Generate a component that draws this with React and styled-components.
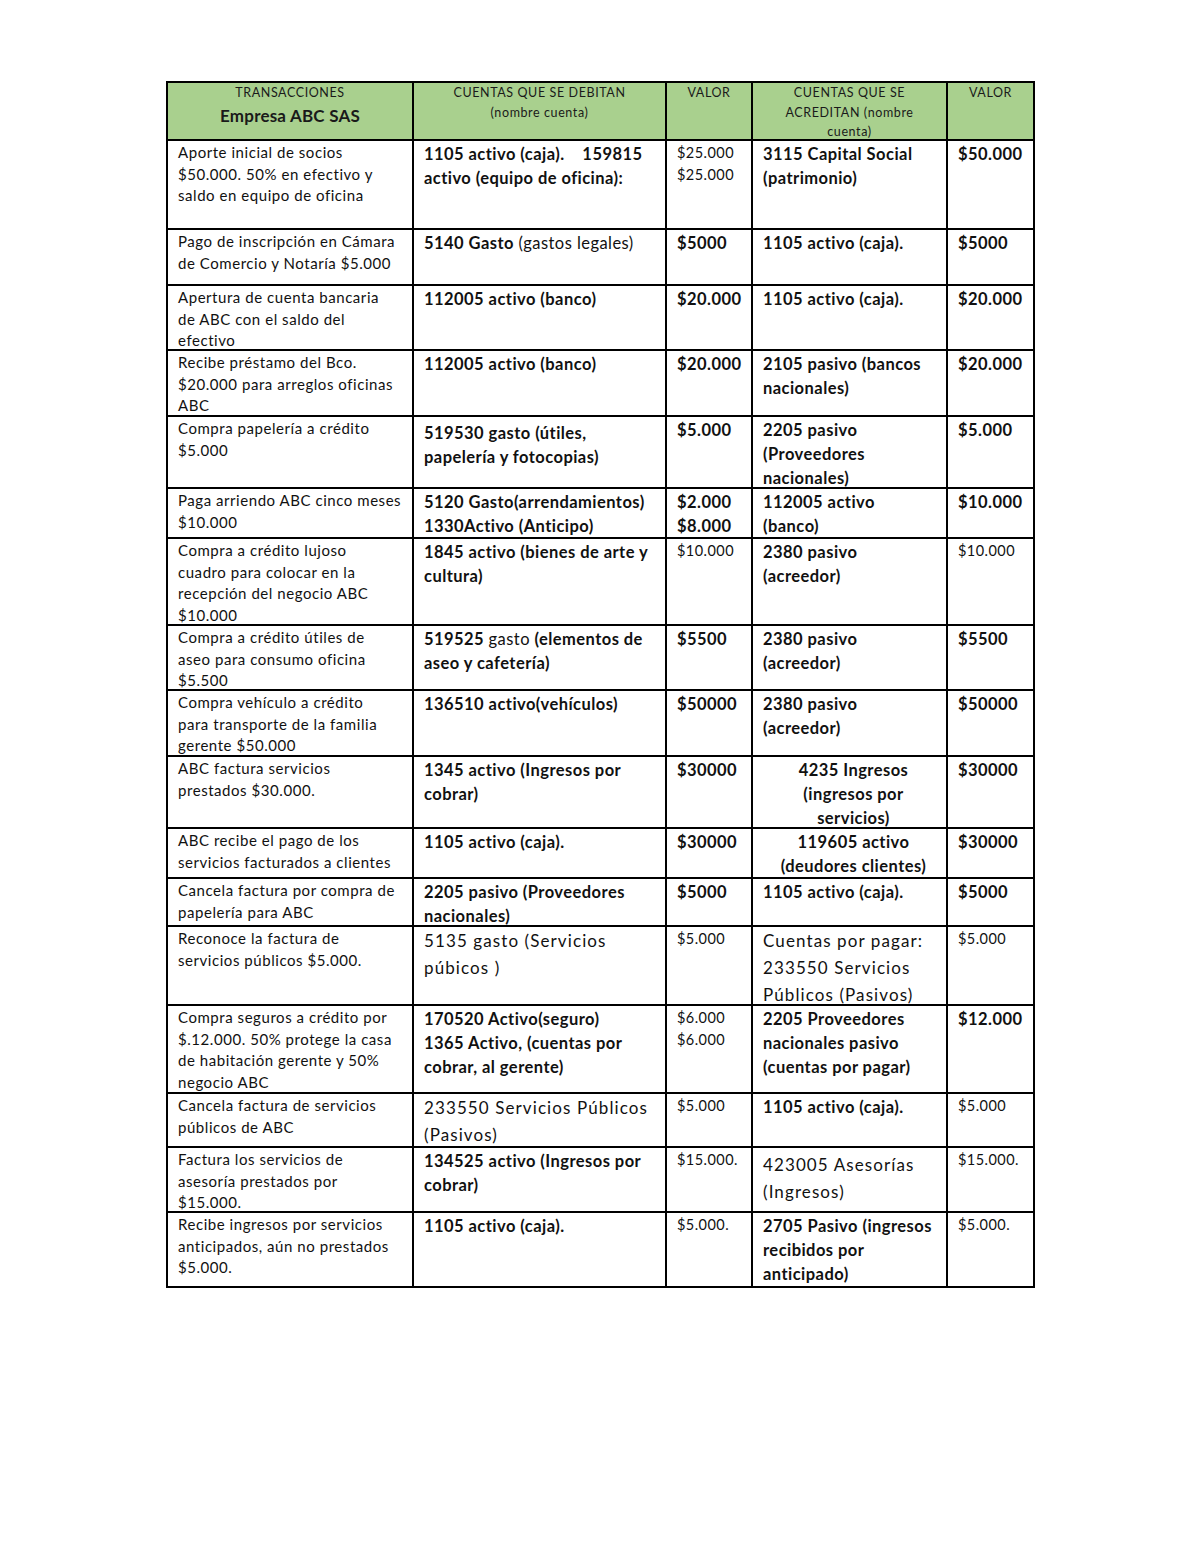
import React from 'react';
import styled, { createGlobalStyle, css } from 'styled-components';

const GlobalStyle = createGlobalStyle`
  html, body {
    margin: 0;
    padding: 0;
    background: #ffffff;
  }
  body {
    font-family: Lato, "Open Sans", "Liberation Sans", sans-serif;
    color: #111111;
  }
`;

const Page = styled.main`
  width: 1200px;
  min-height: 1553px;
  padding: 81px 0 0 166px;
  box-sizing: border-box;
`;

const Sheet = styled.table`
  width: 867px;
  table-layout: fixed;
  border-collapse: collapse;
  border: 2px solid #000;
`;

const HeadCell = styled.th`
  background: #a9d08e;
  border: 2px solid #000;
  vertical-align: top;
  text-align: center;
  padding: 0 4px;
  font-size: 12.5px;
  font-weight: 400;
  line-height: 19.5px;
  color: #1a1a1a;
  letter-spacing: 0.6px;
  white-space: nowrap;
`;

const Company = styled.span`
  display: block;
  font-size: 17px;
  font-weight: 700;
  line-height: 26px;
  letter-spacing: 0.2px;
`;

// lets the last line run into the border, as in the printed sheet
const Inner = styled.div`
  margin-bottom: -24px;
`;

const Row = styled.tr`
  height: ${(p) => p.$h}px;
`;

const kinds = {
  note: css`
    font-size: 15px;
    font-weight: 400;
    line-height: 21.5px;
    letter-spacing: 0.55px;
    padding-top: 1px;
  `,
  acct: css`
    font-size: 16.5px;
    font-weight: 700;
    line-height: 24px;
    letter-spacing: 0.45px;
    padding-top: 1px;
  `,
  plain: css`
    font-size: 17px;
    font-weight: 400;
    line-height: 27px;
    letter-spacing: 1.1px;
    padding-top: 0;
  `,
  amt: css`
    font-size: 14.5px;
    font-weight: 400;
    line-height: 22px;
    letter-spacing: 0.45px;
    padding-top: 1px;
  `,
};

const Cell = styled.td`
  border: 2px solid #000;
  vertical-align: top;
  padding-left: 10px;
  padding-right: 2px;
  padding-bottom: 0;
  white-space: nowrap;
  text-align: ${(p) => (p.$center ? 'center' : 'left')};
  ${(p) => kinds[p.$kind]}
  ${(p) => p.$shift && css`padding-top: ${p.$shift}px;`}
`;

const Light = styled.span`
  font-weight: 400;
`;

const widths = [246, 253, 86, 195, 87];

const rows = [
  {
    h: 89,
    cells: [
      ['note', ['Aporte inicial de socios', '$50.000. 50% en efectivo y', 'saldo en equipo de oficina']],
      ['acct', ['1105 activo (caja).\u00a0\u00a0\u00a0 159815', 'activo (equipo de oficina):']],
      ['amt', ['$25.000', '$25.000']],
      ['acct', ['3115 Capital Social', '(patrimonio)']],
      ['acct', ['$50.000']],
    ],
  },
  {
    h: 56,
    cells: [
      ['note', ['Pago de inscripción en Cámara', 'de Comercio y Notaría $5.000']],
      ['acct', [<>5140 Gasto <Light>(gastos legales)</Light></>]],
      ['acct', ['$5000']],
      ['acct', ['1105 activo (caja).']],
      ['acct', ['$5000']],
    ],
  },
  {
    h: 65,
    cells: [
      ['note', ['Apertura de cuenta bancaria', 'de ABC con el saldo del', 'efectivo']],
      ['acct', ['112005 activo (banco)']],
      ['acct', ['$20.000']],
      ['acct', ['1105 activo (caja).']],
      ['acct', ['$20.000']],
    ],
  },
  {
    h: 66,
    cells: [
      ['note', ['Recibe préstamo del Bco.', '$20.000 para arreglos oficinas', 'ABC']],
      ['acct', ['112005 activo (banco)']],
      ['acct', ['$20.000']],
      ['acct', ['2105 pasivo (bancos', 'nacionales)']],
      ['acct', ['$20.000']],
    ],
  },
  {
    h: 72,
    cells: [
      ['note', ['Compra papelería a crédito', '$5.000']],
      ['acct', ['519530 gasto (útiles,', 'papelería y fotocopias)'], { shift: 4 }],
      ['acct', ['$5.000']],
      ['acct', ['2205 pasivo', '(Proveedores', 'nacionales)']],
      ['acct', ['$5.000']],
    ],
  },
  {
    h: 50,
    cells: [
      ['note', ['Paga arriendo ABC cinco meses', '$10.000']],
      ['acct', ['5120 Gasto(arrendamientos)', '1330Activo (Anticipo)']],
      ['acct', ['$2.000', '$8.000']],
      ['acct', ['112005 activo', '(banco)']],
      ['acct', ['$10.000']],
    ],
  },
  {
    h: 87,
    cells: [
      ['note', ['Compra a crédito lujoso', 'cuadro para colocar en la', 'recepción del negocio ABC', '$10.000']],
      ['acct', ['1845 activo (bienes de arte y', 'cultura)']],
      ['amt', ['$10.000']],
      ['acct', ['2380 pasivo', '(acreedor)']],
      ['amt', ['$10.000']],
    ],
  },
  {
    h: 65,
    cells: [
      ['note', ['Compra a crédito útiles de', 'aseo para consumo oficina', '$5.500']],
      ['acct', [<>519525 <Light>gasto</Light> (elementos de</>, 'aseo y cafetería)']],
      ['acct', ['$5500']],
      ['acct', ['2380 pasivo', '(acreedor)']],
      ['acct', ['$5500']],
    ],
  },
  {
    h: 66,
    cells: [
      ['note', ['Compra vehículo a crédito', 'para transporte de la familia', 'gerente $50.000']],
      ['acct', ['136510 activo(vehículos)']],
      ['acct', ['$50000']],
      ['acct', ['2380 pasivo', '(acreedor)']],
      ['acct', ['$50000']],
    ],
  },
  {
    h: 72,
    cells: [
      ['note', ['ABC factura servicios', 'prestados $30.000.']],
      ['acct', ['1345 activo (Ingresos por', 'cobrar)']],
      ['acct', ['$30000']],
      ['acct', ['4235 Ingresos', '(ingresos por', 'servicios)'], { center: true }],
      ['acct', ['$30000']],
    ],
  },
  {
    h: 50,
    cells: [
      ['note', ['ABC recibe el pago de los', 'servicios facturados a clientes']],
      ['acct', ['1105 activo (caja).']],
      ['acct', ['$30000']],
      ['acct', ['119605 activo', '(deudores clientes)'], { center: true }],
      ['acct', ['$30000']],
    ],
  },
  {
    h: 48,
    cells: [
      ['note', ['Cancela factura por compra de', 'papelería para ABC']],
      ['acct', ['2205 pasivo (Proveedores', 'nacionales)']],
      ['acct', ['$5000']],
      ['acct', ['1105 activo (caja).']],
      ['acct', ['$5000']],
    ],
  },
  {
    h: 79,
    cells: [
      ['note', ['Reconoce la factura de', 'servicios públicos $5.000.']],
      ['plain', ['5135 gasto (Servicios', 'púbicos )']],
      ['amt', ['$5.000']],
      ['plain', ['Cuentas por pagar:', '233550 Servicios', 'Públicos (Pasivos)']],
      ['amt', ['$5.000']],
    ],
  },
  {
    h: 88,
    cells: [
      ['note', ['Compra seguros a crédito por', '$.12.000. 50% protege la casa', 'de habitación gerente y 50%', 'negocio ABC']],
      ['acct', ['170520 Activo(seguro)', '1365 Activo, (cuentas por', 'cobrar, al gerente)']],
      ['amt', ['$6.000', '$6.000']],
      ['acct', ['2205 Proveedores', 'nacionales pasivo', '(cuentas por pagar)']],
      ['acct', ['$12.000']],
    ],
  },
  {
    h: 54,
    cells: [
      ['note', ['Cancela factura de servicios', 'públicos de ABC']],
      ['plain', ['233550 Servicios Públicos', '(Pasivos)']],
      ['amt', ['$5.000']],
      ['acct', ['1105 activo (caja).']],
      ['amt', ['$5.000']],
    ],
  },
  {
    h: 65,
    cells: [
      ['note', ['Factura los servicios de', 'asesoría prestados por', '$15.000.']],
      ['acct', ['134525 activo (Ingresos por', 'cobrar)']],
      ['amt', ['$15.000.']],
      ['plain', ['423005 Asesorías', '(Ingresos)'], { shift: 3 }],
      ['amt', ['$15.000.']],
    ],
  },
  {
    h: 75,
    cells: [
      ['note', ['Recibe ingresos por servicios', 'anticipados, aún no prestados', '$5.000.']],
      ['acct', ['1105 activo (caja).']],
      ['amt', ['$5.000.']],
      ['acct', ['2705 Pasivo (ingresos', 'recibidos por', 'anticipado)']],
      ['amt', ['$5.000.']],
    ],
  },
];

function Lines({ lines }) {
  return (
    <Inner>
      {lines.map((line, i) => (
        <React.Fragment key={i}>
          {i > 0 && <br />}
          {line}
        </React.Fragment>
      ))}
    </Inner>
  );
}

export default function App() {
  return (
    <>
      <GlobalStyle />
      <Page>
        <Sheet>
          <colgroup>
            {widths.map((w, i) => (
              <col key={i} style={{ width: w }} />
            ))}
          </colgroup>
          <thead>
            <Row $h={58}>
              <HeadCell>
                <Inner>
                  TRANSACCIONES
                  <Company>Empresa ABC SAS</Company>
                </Inner>
              </HeadCell>
              <HeadCell>
                <Inner>
                  CUENTAS QUE SE DEBITAN
                  <br />
                  (nombre cuenta)
                </Inner>
              </HeadCell>
              <HeadCell>
                <Inner>VALOR</Inner>
              </HeadCell>
              <HeadCell>
                <Inner>
                  CUENTAS QUE SE
                  <br />
                  ACREDITAN (nombre
                  <br />
                  cuenta)
                </Inner>
              </HeadCell>
              <HeadCell>
                <Inner>VALOR</Inner>
              </HeadCell>
            </Row>
          </thead>
          <tbody>
            {rows.map((row, r) => (
              <Row key={r} $h={row.h}>
                {row.cells.map(([kind, lines, opts = {}], c) => (
                  <Cell key={c} $kind={kind} $center={opts.center} $shift={opts.shift}>
                    <Lines lines={lines} />
                  </Cell>
                ))}
              </Row>
            ))}
          </tbody>
        </Sheet>
      </Page>
    </>
  );
}
